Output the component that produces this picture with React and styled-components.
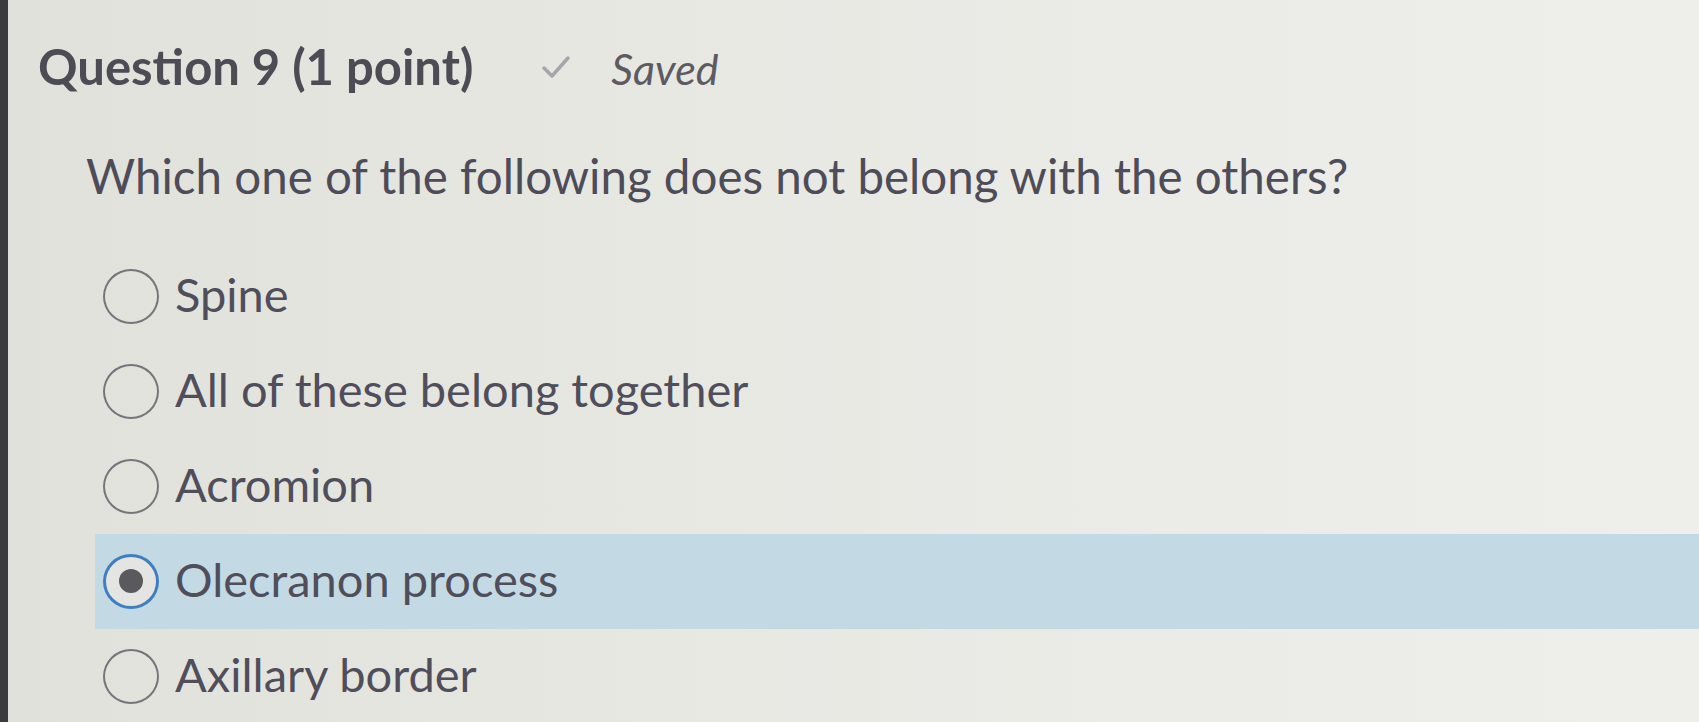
import React from "react";
import styled, { createGlobalStyle } from "styled-components";

const GlobalStyle = createGlobalStyle`
  html, body {
    margin: 0;
    padding: 0;
  }
  body {
    font-family: Lato, "Noto Sans", "Liberation Sans", sans-serif;
    background: #e6e6e1;
  }
`;

const options = [
  { id: "a", label: "Spine" },
  { id: "b", label: "All of these belong together" },
  { id: "c", label: "Acromion" },
  { id: "d", label: "Olecranon process" },
  { id: "e", label: "Axillary border" },
];

const Page = styled.div`
  width: 1699px;
  height: 722px;
  overflow: hidden;
  box-sizing: border-box;
  border-left: 8px solid #3c3c3e;
  background: linear-gradient(90deg, #e1e1dc 0%, #e8e8e3 40%, #eeeeeb 100%);
  padding-top: 37px;
`;

const Header = styled.div`
  display: flex;
  align-items: baseline;
  padding-left: 30px;
`;

const Title = styled.h2`
  margin: 0;
  font-size: 49px;
  font-weight: 700;
  color: #4d4c55;
  line-height: 1.2;
`;

const Status = styled.span`
  display: inline-flex;
  align-items: baseline;
  margin-left: 68px;
  font-size: 43px;
  font-style: italic;
  color: #5c5b63;
`;

const Check = styled.svg`
  width: 30px;
  height: 24px;
  margin-right: 40px;
  align-self: center;
  position: relative;
  top: -2px;
`;

const Prompt = styled.p`
  margin: 51px 0 0;
  padding-left: 78px;
  font-size: 47.5px;
  line-height: 1.2;
  color: #4d4c58;
`;

const List = styled.div`
  display: flex;
  flex-direction: column;
  margin-top: 45px;
`;

const Row = styled.label`
  display: flex;
  align-items: center;
  height: 95px;
  margin-left: 87px;
  padding-left: 8px;
  gap: 16px;
  background: ${(p) => (p.$selected ? "#c3dae5" : "transparent")};
`;

const Radio = styled.span`
  box-sizing: border-box;
  width: 56px;
  height: 55px;
  flex: none;
  border-radius: 50%;
  border: ${(p) => (p.$checked ? "3px solid #3f7fbf" : "2px solid #76757c")};
  background: ${(p) => (p.$checked ? "#e4e4e2" : "transparent")};
  display: flex;
  align-items: center;
  justify-content: center;

  &::after {
    content: "";
    display: ${(p) => (p.$checked ? "block" : "none")};
    width: 24px;
    height: 24px;
    border-radius: 50%;
    background: #5a5a5e;
  }
`;

const Label = styled.span`
  font-size: 47px;
  color: #4f4e5a;
  line-height: 1;
  padding-bottom: 4px;
`;

export default function App() {
  const selected = "d";
  return (
    <>
      <GlobalStyle />
      <Page>
        <Header>
          <Title>Question 9 (1 point)</Title>
          <Status>
            <Check viewBox="0 0 30 24">
              <path
                d="M3 13 L11 21 L27 3"
                fill="none"
                stroke="#a6a6aa"
                strokeWidth="3.5"
                strokeLinecap="round"
                strokeLinejoin="round"
              />
            </Check>
            Saved
          </Status>
        </Header>
        <Prompt>Which one of the following does not belong with the others?</Prompt>
        <List>
          {options.map((o) => (
            <Row key={o.id} $selected={o.id === selected}>
              <Radio $checked={o.id === selected} />
              <Label>{o.label}</Label>
            </Row>
          ))}
        </List>
      </Page>
    </>
  );
}
